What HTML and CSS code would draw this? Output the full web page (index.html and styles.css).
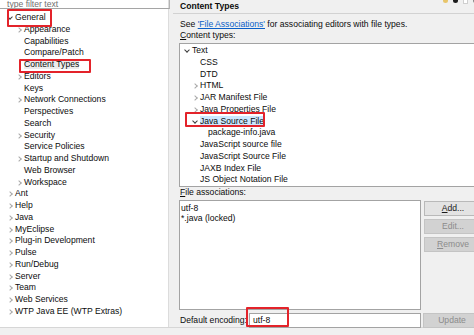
FILE: index.html
```html
<!DOCTYPE html>
<html lang="en">
<head>
    <meta charset="UTF-8">
    <title>Preferences - Content Types</title>
    <link rel="stylesheet" href="styles.css">
</head>
<body>
    <div class="window">
        <!-- Left: preference tree -->
        <aside class="nav">
            <div class="filter">type filter text</div>
            <ul class="tree">
                <li class="row open"><span class="tw"></span>General</li>
                <li class="row lvl1 closed"><span class="tw"></span>Appearance</li>
                <li class="row lvl1"><span class="tw"></span>Capabilities</li>
                <li class="row lvl1"><span class="tw"></span>Compare/Patch</li>
                <li class="row lvl1"><span class="tw"></span><span class="current">Content Types</span></li>
                <li class="row lvl1 closed"><span class="tw"></span>Editors</li>
                <li class="row lvl1"><span class="tw"></span>Keys</li>
                <li class="row lvl1 closed"><span class="tw"></span>Network Connections</li>
                <li class="row lvl1"><span class="tw"></span>Perspectives</li>
                <li class="row lvl1"><span class="tw"></span>Search</li>
                <li class="row lvl1 closed"><span class="tw"></span>Security</li>
                <li class="row lvl1"><span class="tw"></span>Service Policies</li>
                <li class="row lvl1 closed"><span class="tw"></span>Startup and Shutdown</li>
                <li class="row lvl1"><span class="tw"></span>Web Browser</li>
                <li class="row lvl1 closed"><span class="tw"></span>Workspace</li>
                <li class="row closed"><span class="tw"></span>Ant</li>
                <li class="row closed"><span class="tw"></span>Help</li>
                <li class="row closed"><span class="tw"></span>Java</li>
                <li class="row closed"><span class="tw"></span>MyEclipse</li>
                <li class="row closed"><span class="tw"></span>Plug-in Development</li>
                <li class="row closed"><span class="tw"></span>Pulse</li>
                <li class="row closed"><span class="tw"></span>Run/Debug</li>
                <li class="row closed"><span class="tw"></span>Server</li>
                <li class="row closed"><span class="tw"></span>Team</li>
                <li class="row closed"><span class="tw"></span>Web Services</li>
                <li class="row closed"><span class="tw"></span>WTP Java EE (WTP Extras)</li>
            </ul>
        </aside>

        <!-- Right: Content Types page -->
        <main class="page">
            <header class="page-head">
                <h1>Content Types</h1>
                <div class="toolbar">
                    <span class="tool tool-back"></span>
                    <span class="tool tool-dot"></span>
                    <span class="tool tool-blank"></span>
                    <span class="tool tool-menu"></span>
                </div>
            </header>

            <p class="line">See <a href="#">'File Associations'</a> for associating editors with file types.</p>
            <div class="line"><u>C</u>ontent types:</div>

            <div class="types-box">
                <ul class="tree">
                    <li class="row open"><span class="tw"></span>Text</li>
                    <li class="row lvl1"><span class="tw"></span>CSS</li>
                    <li class="row lvl1"><span class="tw"></span>DTD</li>
                    <li class="row lvl1 closed"><span class="tw"></span>HTML</li>
                    <li class="row lvl1 closed"><span class="tw"></span>JAR Manifest File</li>
                    <li class="row lvl1 closed"><span class="tw"></span>Java Properties File</li>
                    <li class="row lvl1 open"><span class="tw"></span><span class="selected">Java Source File</span></li>
                    <li class="row lvl2"><span class="tw"></span>package-info.java</li>
                    <li class="row lvl1"><span class="tw"></span>JavaScript source file</li>
                    <li class="row lvl1"><span class="tw"></span>JavaScript Source File</li>
                    <li class="row lvl1"><span class="tw"></span>JAXB Index File</li>
                    <li class="row lvl1"><span class="tw"></span>JS Object Notation File</li>
                </ul>
                <div class="scrollbar"><div class="thumb"></div></div>
            </div>

            <div class="line"><u>F</u>ile associations:</div>
            <div class="assoc">
                <ul class="assoc-list">
                    <li>utf-8</li>
                    <li>*.java (locked)</li>
                </ul>
                <div class="buttons">
                    <button class="btn"><u>A</u>dd...</button>
                    <button class="btn" disabled>Edit...</button>
                    <button class="btn" disabled><u>R</u>emove</button>
                </div>
            </div>

            <div class="encoding">
                <span class="enc-label">Default encoding:</span>
                <span class="enc-input">utf-8</span>
                <button class="btn" disabled>Update</button>
            </div>
        </main>
    </div>
    <div class="statusbar"></div>

    <!-- Red annotation boxes drawn over the screenshot -->
    <div class="mark mark-general"></div>
    <div class="mark mark-content"></div>
    <div class="mark mark-java"></div>
    <div class="mark mark-encoding"></div>
</body>
</html>
```

FILE: styles.css
```css
body {
    margin: 0;
    width: 474px;
    height: 335px;
    overflow: hidden;
    position: relative;
    background-color: #f0f0f0;
    font-family: "Liberation Sans", Arial, sans-serif;
    font-size: 8.6px;
    color: #0c0c0c;
}

ul {
    list-style: none;
    margin: 0;
    padding: 0;
}

.window {
    display: flex;
    height: 327px;
}

/* Left tree */
.nav {
    width: 168px;
    background-color: #fff;
    border-right: 1px solid #dcdcdc;
    display: flex;
    flex-direction: column;
}

.filter {
    height: 8px;
    line-height: 9px;
    padding-left: 7px;
    color: #707070;
    border-right: 1px solid #b5b5b5;
    border-bottom: 1px solid #a5a5a5;
    width: 162px;
    overflow: hidden;
}

.tree {
    padding-top: 3px;
    line-height: 11.75px;
    white-space: nowrap;
}

.row {
    height: 11.75px;
    padding-left: 7px;
}

.row.lvl1 {
    padding-left: 16px;
}

.row.lvl2 {
    padding-left: 24px;
}

.tw {
    display: inline-block;
    width: 8px;
    height: 11px;
    vertical-align: top;
    position: relative;
}

.closed .tw::before,
.open .tw::before {
    content: "";
    position: absolute;
    width: 3px;
    height: 3px;
    border-right: 1px solid #a8a8a8;
    border-bottom: 1px solid #a8a8a8;
}

.closed .tw::before {
    left: 1px;
    top: 4px;
    transform: rotate(-45deg);
}

.open .tw::before {
    left: 1px;
    top: 3px;
    border-color: #3c3c3c;
    transform: rotate(45deg);
}

.current {
    background-color: #ececec;
}

/* Right page */
.page {
    flex: 1;
    margin-left: 4px;
    display: flex;
    flex-direction: column;
}

.page-head {
    height: 13px;
    border-bottom: 1px solid #d2d2d2;
    display: flex;
    justify-content: space-between;
    padding-left: 7px;
}

.page-head h1 {
    margin: 0;
    font-size: 8.6px;
    line-height: 13px;
    font-weight: bold;
}

.toolbar {
    display: flex;
    gap: 5px;
    padding-right: 5px;
    margin-top: -2px;
}

.tool {
    width: 5px;
    height: 5px;
    border-radius: 50%;
}

.tool-back {
    background-color: #e8c56a;
}

.tool-dot {
    background-color: #1c1c1c;
}

.tool-blank {
    background-color: #fff;
    border: 1px solid #cfcfcf;
    border-radius: 0;
    width: 3px;
    height: 4px;
}

.tool-menu {
    background-color: #8a8a8a;
    width: 4px;
}

.line {
    margin: 0 0 0 7px;
    line-height: 11.75px;
    white-space: nowrap;
}

p.line {
    margin-top: 4.5px;
}

.line a {
    color: #0a5fc8;
}

.types-box {
    margin: 1px 0 0 6px;
    height: 142px;
    background-color: #fff;
    border: 1px solid #a3a3a3;
    border-right: none;
    display: flex;
}

.types-box .tree {
    flex: 1;
    padding-top: 1px;
}

.types-box .row {
    padding-left: 4px;
}

.types-box .row.lvl1 {
    padding-left: 12px;
}

.types-box .row.lvl2 {
    padding-left: 20px;
}

.selected {
    background-color: #cce8ff;
}

.scrollbar {
    width: 6px;
    background-color: #f0f0f0;
    border-left: 1px solid #e6e6e6;
}

.thumb {
    margin-top: 24px;
    height: 70px;
    background-color: #cdcdcd;
}

.assoc {
    display: flex;
    gap: 3px;
    margin-left: 6px;
    margin-top: 1px;
}

.assoc-list {
    width: 239px;
    height: 106px;
    padding-top: 2px;
    background-color: #fff;
    border: 1px solid #a3a3a3;
    padding-left: 1px;
    line-height: 10.5px;
}

.buttons {
    display: flex;
    flex-direction: column;
    gap: 3px;
    padding-top: 1px;
}

.btn {
    width: 58px;
    height: 15px;
    padding: 0;
    font-family: inherit;
    font-size: 8.6px;
    color: #1a1a1a;
    background-color: #e3e3e3;
    border: 1px solid #b9b9b9;
}

.btn:disabled {
    color: #8c8c8c;
    background-color: #d2d2d2;
    border-color: #c4c4c4;
}

.encoding {
    display: flex;
    align-items: center;
    gap: 2px;
    margin: 3px 0 0 7px;
    height: 15px;
    white-space: nowrap;
}

.enc-label {
    width: 67px;
}

.enc-input {
    width: 167px;
    height: 13px;
    line-height: 13px;
    padding-left: 3px;
    background-color: #fff;
    border: 1px solid #a3a3a3;
}

.statusbar {
    height: 8px;
    border-top: 1px solid #d6d6d6;
}

/* Annotations */
.mark {
    position: absolute;
    border: 2px solid #e3232a;
    border-radius: 1px;
    box-sizing: border-box;
}

.mark-general {
    left: 7px;
    top: 9px;
    width: 45px;
    height: 18px;
}

.mark-content {
    left: 19px;
    top: 59px;
    width: 72px;
    height: 14px;
}

.mark-java {
    left: 185px;
    top: 112px;
    width: 80px;
    height: 15px;
}

.mark-encoding {
    left: 246px;
    top: 307px;
    width: 43px;
    height: 20px;
}
```
